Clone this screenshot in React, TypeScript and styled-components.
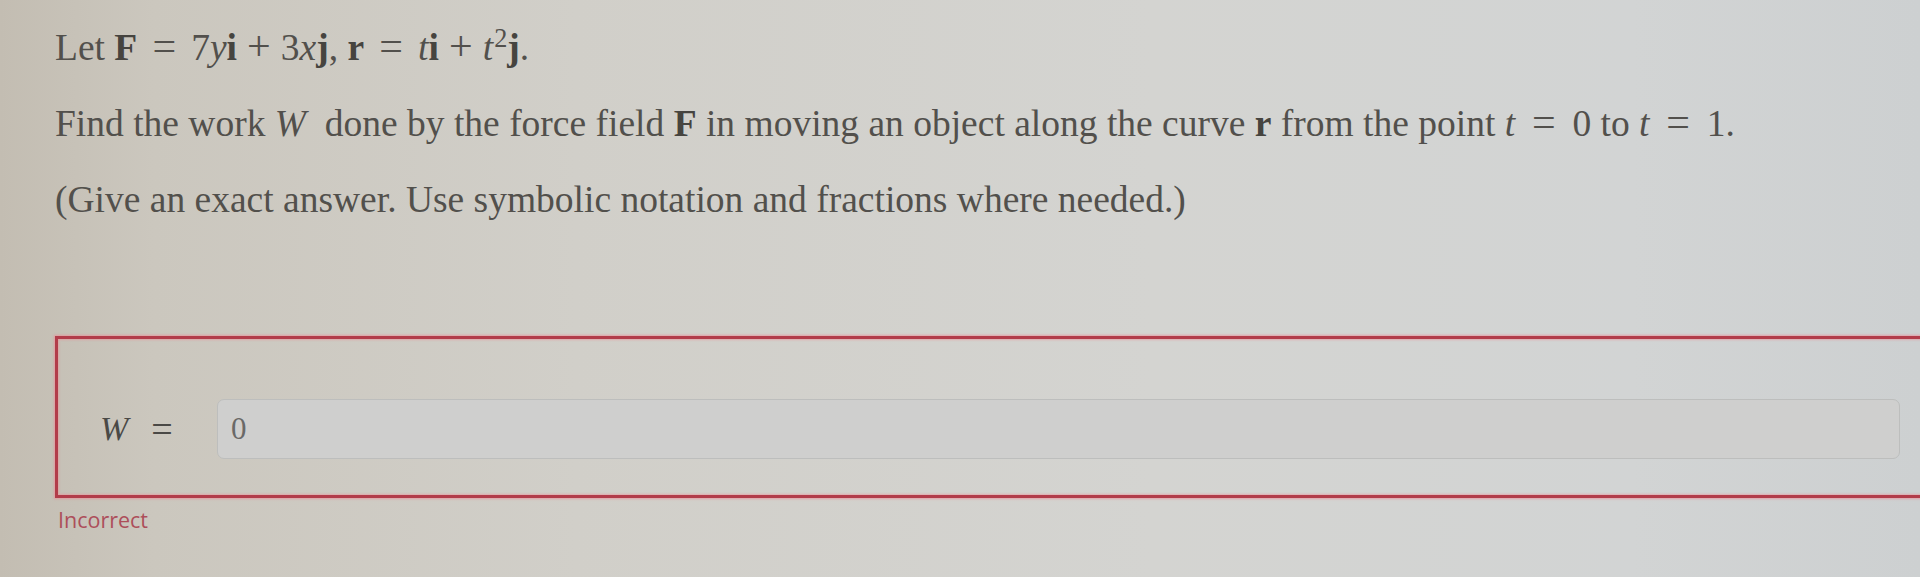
import React from 'react'
import styled, { createGlobalStyle } from 'styled-components'

const GlobalStyle = createGlobalStyle`
  html, body {
    margin: 0;
    padding: 0;
  }
  body {
    width: 1920px;
    height: 577px;
    overflow: hidden;
  }
`

const Page = styled.main`
  box-sizing: border-box;
  width: 1920px;
  height: 577px;
  overflow: hidden;
  padding: 10px 0 0 55px;
  background: linear-gradient(
    90deg,
    #c3bdb2 0%,
    #cbc7be 8%,
    #d1cfc9 30%,
    #d4d4d1 60%,
    #d2d4d4 85%,
    #cdd0d1 100%
  );
  font-family: 'Liberation Serif', 'Times New Roman', serif;
  color: #52504c;
`

const Paragraph = styled.p`
  margin: 0;
  height: 76px;
  font-size: 37.5px;
  line-height: 76px;
  white-space: nowrap;
`

const V = styled.i`
  font-style: italic;
`

const B = styled.b`
  font-weight: 700;
  color: #46443f;
`

const Op = styled.span<{ $gap?: number }>`
  display: inline-block;
  font-size: 1.12em;
  line-height: 0;
  margin: 0 ${({ $gap }) => $gap ?? 0.4}em;
`

const Sup = styled.sup`
  font-size: 0.7em;
  line-height: 0;
  vertical-align: 0.5em;
  margin-left: 1px;
`

const AnswerBox = styled.section`
  box-sizing: border-box;
  margin-top: 98px;
  width: 2100px;
  height: 162px;
  padding: 60px 0 0 42px;
  border: 3px solid #b23c4a;
  box-shadow: 0 0 2px 1px rgba(236, 140, 150, 0.7),
    inset 0 0 2px 1px rgba(236, 140, 150, 0.6);
  display: flex;
  align-items: flex-start;
`

const Label = styled.div`
  width: 117px;
  height: 60px;
  display: flex;
  align-items: center;
  font-size: 34px;
  color: #4a4946;
`

const Field = styled.div`
  box-sizing: border-box;
  width: 1683px;
  height: 60px;
  padding-left: 13px;
  display: flex;
  align-items: center;
  border: 1px solid #bdbebd;
  border-radius: 7px;
  background: #cfcfce;
  font-size: 31px;
  color: #6a6967;
`

const Feedback = styled.div`
  margin-top: 7px;
  padding-left: 3px;
  font-family: 'Open Sans', 'Liberation Sans', sans-serif;
  font-size: 21.5px;
  color: #ad4e5a;
`

export default function App() {
  return (
    <>
      <GlobalStyle />
      <Page>
        <Paragraph>
          Let <B>F</B>
          <Op $gap={0.36}>=</Op>7<V>y</V>
          <B>i</B>
          <Op $gap={0.24}>+</Op>3<V>x</V>
          <B>j</B>, <B>r</B>
          <Op $gap={0.36}>=</Op>
          <V>t</V>
          <B>i</B>
          <Op $gap={0.24}>+</Op>
          <V>t</V>
          <Sup>2</Sup>
          <B>j</B>.
        </Paragraph>
        <Paragraph>
          Find the work <V>W</V>&nbsp; done by the force field <B>F</B> in moving an object along
          the curve <B>r</B> from the point <V>t</V>
          <Op>=</Op>0 to <V>t</V>
          <Op>=</Op>1.
        </Paragraph>
        <Paragraph>(Give an exact answer. Use symbolic notation and fractions where needed.)</Paragraph>
        <AnswerBox>
          <Label>
            <V>W</V>
            <Op $gap={0.6}>=</Op>
          </Label>
          <Field>0</Field>
        </AnswerBox>
        <Feedback>Incorrect</Feedback>
      </Page>
    </>
  )
}
